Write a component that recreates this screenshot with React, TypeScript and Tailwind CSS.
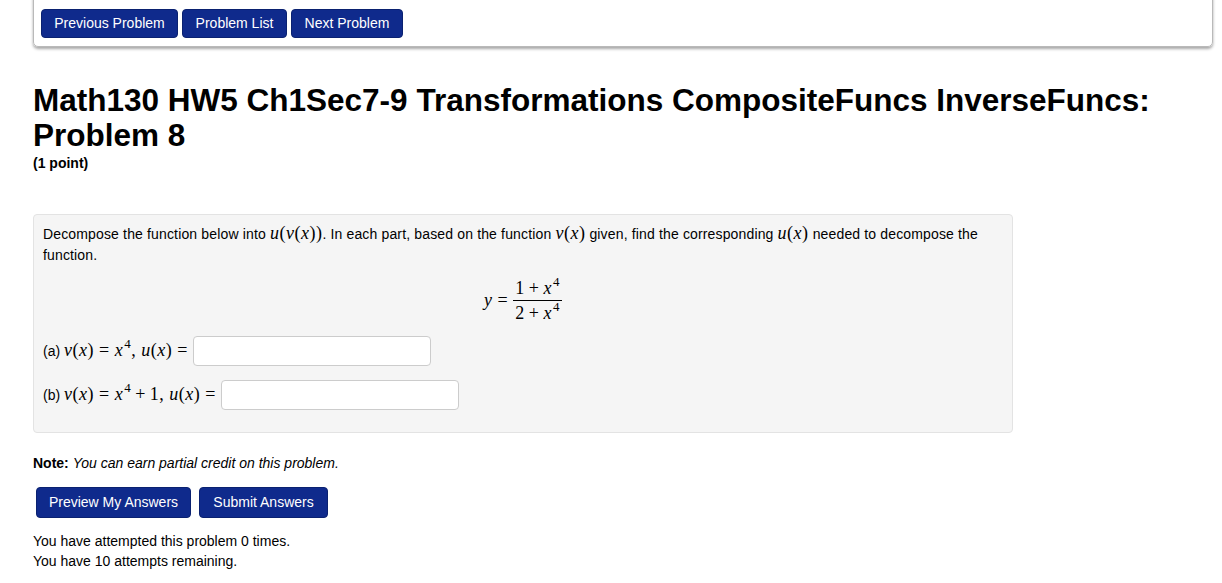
import { FC, ReactNode } from "react";

// little MathJax look-alike helpers
const M: FC<{ children: ReactNode }> = ({ children }) => (
    <span className="font-['Liberation_Serif',serif] text-[18px] leading-[20px] tracking-[0.5px] whitespace-nowrap">{children}</span>
)
const I: FC<{ children: ReactNode }> = ({ children }) => <i>{children}</i>
const Eq = () => <span className="mx-[5px]">=</span>
const Plus = () => <span className="mx-[4px]">+</span>
const Sup: FC<{ children: ReactNode }> = ({ children }) => (
    <sup className="text-[13px] ml-[1px] -top-[8px]">{children}</sup>
)

const navBtn = "h-[29px] rounded-[4px] bg-[#0f2a8c] text-white text-[14px] border border-[#0a2170]"
const bigBtn = "h-[31px] rounded-[4px] bg-[#0f2a8c] text-white text-[14px] border border-[#0a2170]"

const App: FC = () => {
    return (
        <div className="min-h-screen bg-white text-black font-['Liberation_Sans',Arial,sans-serif]">
            {/* top nav */}
            <div className="ml-[33px] mr-[9px] -mt-[4px] pt-[12px] pb-[8px] pl-[7px] border border-[#b9b9b9] rounded-b-[5px] shadow-[0_2px_3px_rgba(0,0,0,0.35)] flex gap-[4px]">
                <button className={navBtn + " w-[137px]"}>Previous Problem</button>
                <button className={navBtn + " w-[105px]"}>Problem List</button>
                <button className={navBtn + " w-[112px]"}>Next Problem</button>
            </div>

            <div className="px-[33px]">
                <h1 className="mt-[36px] text-[31.5px] leading-[35px] font-bold">
                    Math130 HW5 Ch1Sec7-9 Transformations CompositeFuncs InverseFuncs: Problem 8
                </h1>
                <p className="text-[14px] font-bold">(1 point)</p>

                <div className="mt-[40px] w-[980px] bg-[#f5f5f5] border border-[#e3e3e3] rounded-[4px] px-[9px] pt-[8px] pb-[22px] text-[14px] leading-[21px]">
                    <p className="tracking-[0.15px]">
                        Decompose the function below into <M><I>u</I>(<I>v</I>(<I>x</I>))</M>. In each part, based on the function <M><I>v</I>(<I>x</I>)</M> given, find the corresponding <M><I>u</I>(<I>x</I>)</M> needed to decompose the function.
                    </p>

                    <div className="flex justify-center items-center mt-[11px] mb-[12px] font-['Liberation_Serif',serif] text-[18px] tracking-[0.5px]">
                        <I>y</I>
                        <Eq />
                        <span className="inline-flex flex-col items-center leading-[22px]">
                            <span className="px-[2px] pb-[1px]">1<Plus /><I>x</I><Sup>4</Sup></span>
                            <span className="px-[2px] pt-[1px] border-t border-black">2<Plus /><I>x</I><Sup>4</Sup></span>
                        </span>
                    </div>

                    <div className="flex items-center">
                        <span>(a) <M><I>v</I>(<I>x</I>)<Eq /><I>x</I><Sup>4</Sup>, <I>u</I>(<I>x</I>)<Eq /></M></span>
                        <input className="w-[238px] h-[30px] bg-white border border-[#cccccc] rounded-[4px]" />
                    </div>
                    <div className="flex items-center mt-[14px]">
                        <span>(b) <M><I>v</I>(<I>x</I>)<Eq /><I>x</I><Sup>4</Sup><Plus />1, <I>u</I>(<I>x</I>)<Eq /></M></span>
                        <input className="w-[238px] h-[30px] bg-white border border-[#cccccc] rounded-[4px]" />
                    </div>
                </div>

                <p className="mt-[20px] text-[14px]">
                    <b>Note:</b> <i>You can earn partial credit on this problem.</i>
                </p>

                <div className="flex gap-[8px] mt-[13px] ml-[3px]">
                    <button className={bigBtn + " w-[155px]"}>Preview My Answers</button>
                    <button className={bigBtn + " w-[129px]"}>Submit Answers</button>
                </div>

                <div className="mt-[13px] text-[14px] leading-[20px]">
                    <p>You have attempted this problem 0 times.</p>
                    <p>You have 10 attempts remaining.</p>
                </div>
            </div>
        </div>
    )
}

export default App;
